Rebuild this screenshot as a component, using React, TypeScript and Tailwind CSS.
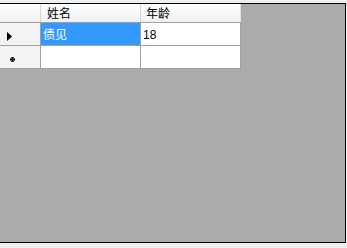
import React from "react";

const font = { fontFamily: '"Liberation Sans", "Noto Sans CJK SC", sans-serif' };

export default function App() {
  return (
    <div className="w-[347px] h-[248px] bg-[#f0f0f0] pt-[3px]" style={font}>
      <div className="w-[346px] h-[240px] border-t border-r border-b border-black bg-[#ababab] box-border">
        <div className="w-[241px] text-[12px] leading-none">
          {/* header */}
          <div className="flex h-[19px] border-b border-[#a0a0a0] bg-gradient-to-b from-[#fdfdfd] via-[#f7f8f9] to-[#eff0f1]">
            <div className="w-[41px] border-r border-[#d5d5d5]" />
            <div className="w-[100px] border-r border-[#d5d5d5] flex items-center pl-[6px] pt-[1px] text-black">姓名</div>
            <div className="w-[100px] border-r border-[#e2e2e2] flex items-center pl-[5px] pt-[1px] text-black">年龄</div>
          </div>
          {/* row 1 */}
          <div className="flex h-[23px] border-b border-[#a0a0a0] bg-white">
            <div className="w-[41px] border-r border-[#a0a0a0] bg-[#f3f3f3] flex items-center pl-[7px] pt-[4px]">
              <svg width="5" height="9" viewBox="0 0 5 9">
                <path d="M0 0 L5 4.5 L0 9 Z" fill="#000" />
              </svg>
            </div>
            <div className="w-[100px] border-r border-[#a0a0a0] bg-[#3399ff] text-white flex items-center pl-[2px] pt-[1px]">债见</div>
            <div className="w-[100px] border-r border-[#a0a0a0] flex items-center pl-[2px] pt-[1px] text-black">18</div>
          </div>
          {/* new row */}
          <div className="flex h-[23px] border-b border-[#a0a0a0] bg-white">
            <div className="w-[41px] border-r border-[#a0a0a0] bg-[#f3f3f3] flex items-center pl-[10px] pt-[4px]">
              <svg width="5" height="5" viewBox="0 0 5 5">
                <path d="M1 0 H4 V1 H5 V4 H4 V5 H1 V4 H0 V1 H1 Z" fill="#555" />
                <rect x="2" y="0" width="1" height="5" fill="#111" />
                <rect x="0" y="2" width="5" height="1" fill="#111" />
              </svg>
            </div>
            <div className="w-[100px] border-r border-[#a0a0a0]" />
            <div className="w-[100px] border-r border-[#a0a0a0]" />
          </div>
        </div>
      </div>
    </div>
  );
}
